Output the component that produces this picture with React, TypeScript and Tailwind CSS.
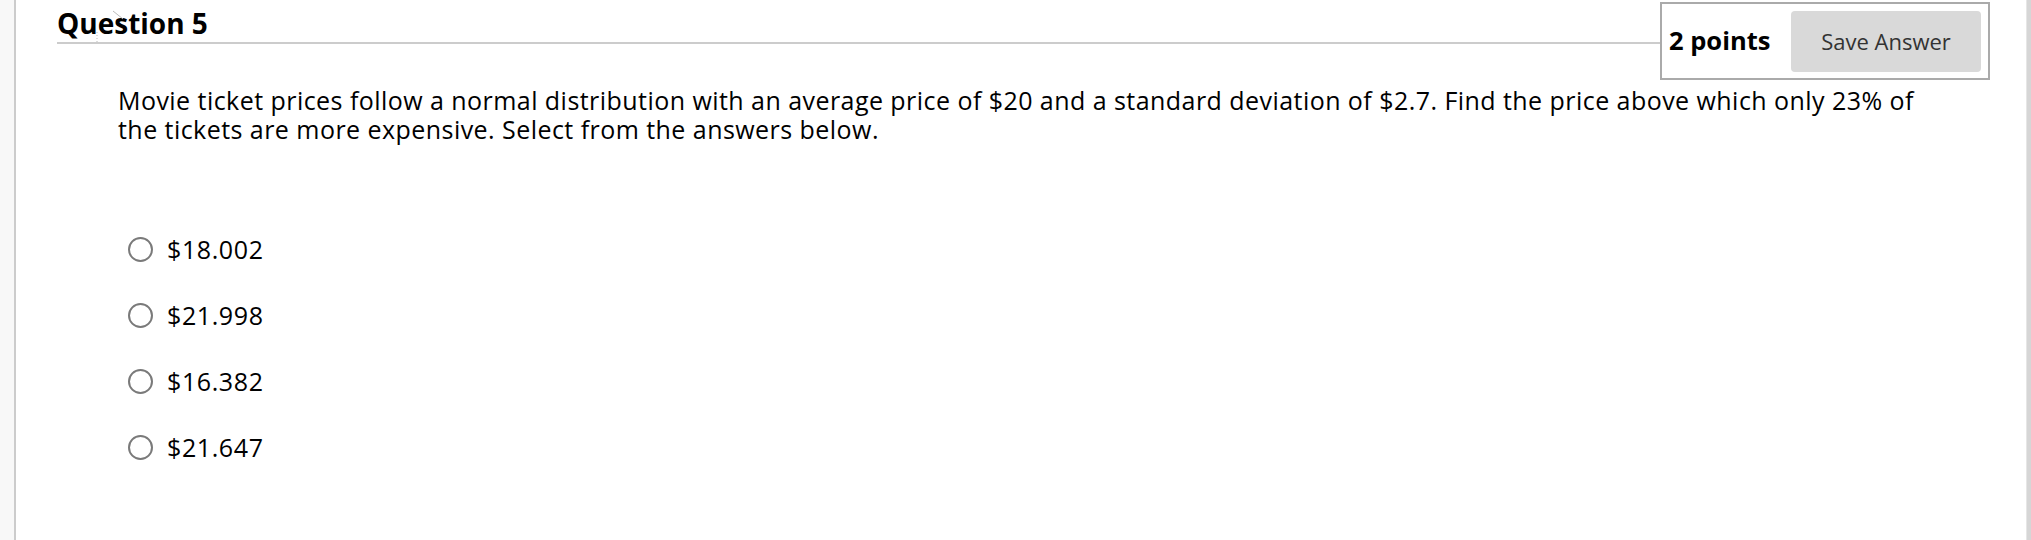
import React from 'react';

const answers = ['$18.002', '$21.998', '$16.382', '$21.647'];

function Radio() {
  return <span className="block h-[25px] w-[25px] shrink-0 rounded-full border-2 border-[#7a7a7a] bg-white" />;
}

export default function App() {
  return (
    <div className="flex h-[540px] w-[2031px] bg-white font-['Open_Sans',sans-serif] text-black">
      <div className="w-[16px] shrink-0 border-r-2 border-[#cccccc] bg-[#f8f8f8]" />

      <div className="relative flex-1">
        {/* header */}
        <div className="flex items-start pr-[36px]">
          <div className="flex-1 pl-[41px]">
            <h2 className="border-b-2 border-[#cccccc] pt-[4px] text-[28px] font-bold leading-[38px]">Question 5</h2>
          </div>
          <div className="mt-[2px] flex h-[78px] w-[330px] items-center justify-between border-2 border-[#aaaaaa] pl-[7px] pr-[7px]">
            <span className="text-[25.5px] font-bold leading-none">2 points</span>
            <button
              type="button"
              className="h-[61px] w-[190px] rounded-[4px] bg-[#d9d9d9] text-[22px] text-[#333333]"
            >
              Save Answer
            </button>
          </div>
        </div>

        {/* faint cursor remnant */}
        <svg className="absolute left-[60px] top-[8px]" width="50" height="40" viewBox="0 0 50 40">
          <line x1="37" y1="3" x2="47" y2="11" stroke="#bbbbbb" strokeWidth="1" />
          <line x1="21" y1="24" x2="21" y2="36" stroke="#bbbbbb" strokeWidth="1" strokeDasharray="1 2" />
        </svg>

        {/* question body */}
        <p className="mt-[6px] w-[1920px] pl-[102px] text-[25px] leading-[29px] tracking-[0.45px]">
          Movie ticket prices follow a normal distribution with an average price of $20 and a standard deviation of $2.7.
          Find the price above which only 23% of the tickets are more expensive. Select from the answers below.
        </p>

        <ul className="mt-[72px] pl-[112px]">
          {answers.map((a) => (
            <li key={a} className="flex h-[66px] items-center gap-[14px]">
              <Radio />
              <span className="text-[25px] leading-none tracking-[0.6px]">{a}</span>
            </li>
          ))}
        </ul>
      </div>

      <div className="w-[5px] shrink-0 border-l border-[#e6e6e6] bg-[#d6d6d6]" />
    </div>
  );
}
